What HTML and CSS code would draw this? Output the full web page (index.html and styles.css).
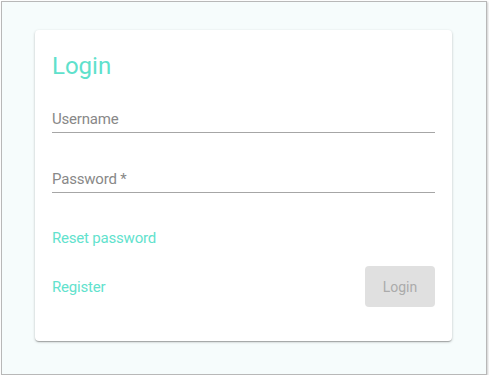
FILE: index.html
```html
<!DOCTYPE html>
<html lang="en">
<head>
<meta charset="utf-8">
<title>Login</title>
<link rel="stylesheet" href="styles.css">
</head>
<body>
<div class="frame">
  <div class="card">
    <h1 class="title">Login</h1>
    <div class="field field-first"><span class="label">Username</span></div>
    <div class="field field-second"><span class="label">Password *</span></div>
    <a class="link reset" href="#">Reset password</a>
    <div class="actions">
      <a class="link" href="#">Register</a>
      <button class="btn" disabled>Login</button>
    </div>
  </div>
</div>
</body>
</html>
```
FILE: styles.css
```css
html, body {
  margin: 0;
  padding: 0;
  background: #ffffff;
  font-family: Roboto, "Liberation Sans", Arial, sans-serif;
}
.frame {
  margin: 1px 0 0 1px;
  width: 486px;
  height: 374px;
  box-sizing: border-box;
  border: 1px solid #b8b8b8;
  box-shadow: 1px 1px 2px rgba(0,0,0,0.2);
  background: #f6fcfc;
  padding: 28px 33px 0 33px;
}
.card {
  width: 417px;
  box-sizing: border-box;
  background: #ffffff;
  border-radius: 4px;
  padding: 20px 17px 34px 17px;
  box-shadow: 0 1px 3px rgba(0,0,0,0.2), 0 1px 1px rgba(0,0,0,0.14), 0 2px 1px -1px rgba(0,0,0,0.12);
  display: flex;
  flex-direction: column;
}
.title {
  margin: 0;
  font-size: 24px;
  line-height: 32px;
  font-weight: 400;
  color: #5fe1cc;
}
.field {
  height: 28px;
  box-sizing: border-box;
  border-bottom: 1px solid #a6a6a6;
  padding-top: 2px;
}
.field-first { margin-top: 23px; }
.field-second { margin-top: 32px; }
.label {
  display: block;
  font-size: 15px;
  letter-spacing: -0.2px;
  line-height: 24px;
  color: #888888;
}
.link {
  font-size: 15px;
  letter-spacing: -0.2px;
  line-height: 24px;
  color: #62e2cd;
  text-decoration: none;
}
.reset {
  margin-top: 33px;
  align-self: flex-start;
}
.actions {
  margin-top: 16px;
  display: flex;
  justify-content: space-between;
  align-items: center;
}
.btn {
  width: 70px;
  height: 41px;
  border: none;
  border-radius: 4px;
  background: #e0e0e0;
  color: #ababab;
  font-family: Roboto, "Liberation Sans", Arial, sans-serif;
  font-size: 14px;
  padding: 0;
}
```
